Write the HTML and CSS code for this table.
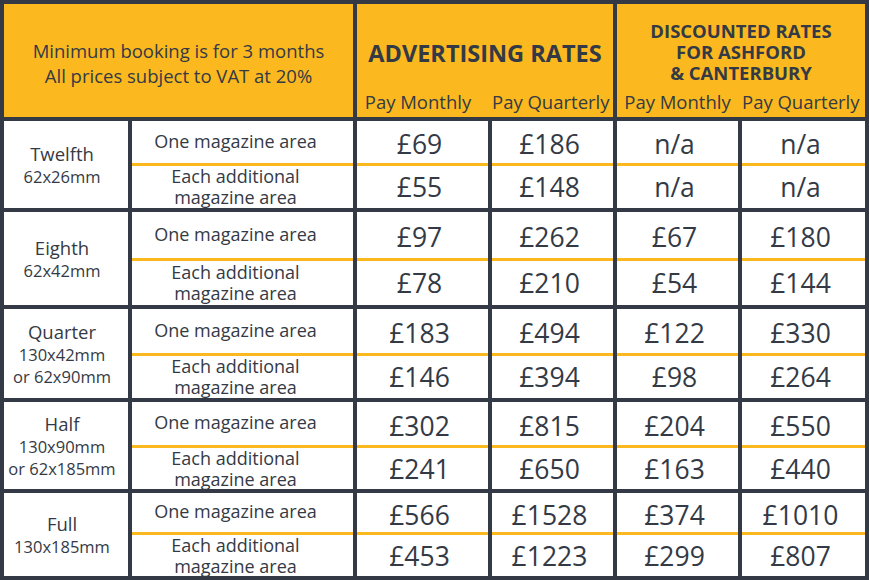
FILE: index.html
```html
<!DOCTYPE html>
<html>
<head>
<meta charset="utf-8">
<link rel="stylesheet" href="styles.css">
</head>
<body>
<div class="table">
  <div class="head">
    <div class="note">Minimum booking is for 3 months<br>All prices subject to VAT at 20%</div>
    <div class="hgroup">
      <div class="htitle adv">ADVERTISING RATES</div>
      <div class="hsub sub-adv"><span class="c3">Pay Monthly</span><span class="c4">Pay Quarterly</span></div>
    </div>
    <div class="hgroup">
      <div class="htitle disc">DISCOUNTED RATES<br>FOR ASHFORD<br>&amp; CANTERBURY</div>
      <div class="hsub sub-disc"><span class="c5">Pay Monthly</span><span class="c6">Pay Quarterly</span></div>
    </div>
  </div>

  <div class="group g1">
    <div class="size"><span class="name">Twelfth</span><span class="dim">62x26mm</span></div>
    <div class="cell top label one">One magazine area</div>
    <div class="cell top price">£69</div>
    <div class="cell top price">£186</div>
    <div class="cell top price">n/a</div>
    <div class="cell top price">n/a</div>
    <div class="cell label each">Each additional<br>magazine area</div>
    <div class="cell price">£55</div>
    <div class="cell price">£148</div>
    <div class="cell price">n/a</div>
    <div class="cell price">n/a</div>
  </div>

  <div class="group g2">
    <div class="size"><span class="name">Eighth</span><span class="dim">62x42mm</span></div>
    <div class="cell top label one">One magazine area</div>
    <div class="cell top price">£97</div>
    <div class="cell top price">£262</div>
    <div class="cell top price">£67</div>
    <div class="cell top price">£180</div>
    <div class="cell label each">Each additional<br>magazine area</div>
    <div class="cell price">£78</div>
    <div class="cell price">£210</div>
    <div class="cell price">£54</div>
    <div class="cell price">£144</div>
  </div>

  <div class="group g3">
    <div class="size"><span class="name">Quarter</span><span class="dim">130x42mm<br>or 62x90mm</span></div>
    <div class="cell top label one">One magazine area</div>
    <div class="cell top price">£183</div>
    <div class="cell top price">£494</div>
    <div class="cell top price">£122</div>
    <div class="cell top price">£330</div>
    <div class="cell label each">Each additional<br>magazine area</div>
    <div class="cell price">£146</div>
    <div class="cell price">£394</div>
    <div class="cell price">£98</div>
    <div class="cell price">£264</div>
  </div>

  <div class="group g4">
    <div class="size"><span class="name">Half</span><span class="dim">130x90mm<br>or 62x185mm</span></div>
    <div class="cell top label one">One magazine area</div>
    <div class="cell top price">£302</div>
    <div class="cell top price">£815</div>
    <div class="cell top price">£204</div>
    <div class="cell top price">£550</div>
    <div class="cell label each">Each additional<br>magazine area</div>
    <div class="cell price">£241</div>
    <div class="cell price">£650</div>
    <div class="cell price">£163</div>
    <div class="cell price">£440</div>
  </div>

  <div class="group g5">
    <div class="size"><span class="name">Full</span><span class="dim">130x185mm</span></div>
    <div class="cell top label one">One magazine area</div>
    <div class="cell top price">£566</div>
    <div class="cell top price">£1528</div>
    <div class="cell top price">£374</div>
    <div class="cell top price">£1010</div>
    <div class="cell label each">Each additional<br>magazine area</div>
    <div class="cell price">£453</div>
    <div class="cell price">£1223</div>
    <div class="cell price">£299</div>
    <div class="cell price">£807</div>
  </div>
</div>
</body>
</html>
```

FILE: styles.css
```css
html, body {
  margin: 0;
  padding: 0;
  background: #343a45;
}
body {
  font-family: "Open Sans", "Noto Sans", sans-serif;
  color: #343a45;
}
.table {
  width: 869px;
  height: 580px;
  box-sizing: border-box;
  background: #343a45;
  padding: 4px;
  display: flex;
  flex-direction: column;
  gap: 4px;
}
.head {
  display: grid;
  grid-template-columns: 349px 256px 248px;
  column-gap: 4px;
  height: 113px;
}
.head > div {
  background: #fbb91f;
}
.note {
  display: flex;
  align-items: center;
  justify-content: center;
  text-align: center;
  font-size: 18.5px;
  line-height: 25px;
  padding-top: 4px;
  box-sizing: border-box;
}
.hgroup {
  display: flex;
  flex-direction: column;
}
.htitle {
  flex: 1;
  display: flex;
  align-items: center;
  justify-content: center;
  text-align: center;
  font-weight: 700;
}
.adv {
  font-size: 23.5px;
  padding-top: 12px;
}
.disc {
  font-size: 18.5px;
  line-height: 21px;
  padding-top: 10px;
}
.hsub {
  display: flex;
  gap: 4px;
  height: 28px;
  font-size: 18.5px;
  white-space: nowrap;
}
.hsub span {
  text-align: center;
  box-sizing: border-box;
}
.c3 { flex: 0 0 131px; padding-right: 9px; }
.c4 { flex: 0 0 121px; padding-right: 9px; }
.c5 { flex: 0 0 121px; }
.c6 { flex: 0 0 123px; padding-right: 6px; }
.group {
  display: grid;
  grid-template-columns: 124px 221px 131px 121px 121px 123px;
  column-gap: 4px;
}
.g1 { grid-template-rows: 45px 42px; }
.g2 { grid-template-rows: 49px 44px; }
.g3 { grid-template-rows: 47px 42px; }
.g4 { grid-template-rows: 46px 41px; }
.g5 { grid-template-rows: 42px 41px; }
.size {
  grid-row: span 2;
  background: #fff;
  display: flex;
  flex-direction: column;
  align-items: center;
  justify-content: center;
  text-align: center;
  padding-right: 8px;
}
.name {
  font-size: 18.5px;
  line-height: 24px;
}
.dim {
  font-size: 16.5px;
  line-height: 22px;
}
.cell {
  background: #fff;
  display: flex;
  align-items: center;
  justify-content: center;
  text-align: center;
  box-sizing: border-box;
}
.cell.top {
  border-bottom: 3px solid #fbb91f;
}
.label {
  font-size: 18px;
  line-height: 21px;
  padding-right: 14px;
}
.cell.top.label {
  padding-bottom: 2px;
}
.price {
  font-size: 26.5px;
  padding-right: 6px;
}
.cell.top.price {
  padding-top: 4px;
}
```
